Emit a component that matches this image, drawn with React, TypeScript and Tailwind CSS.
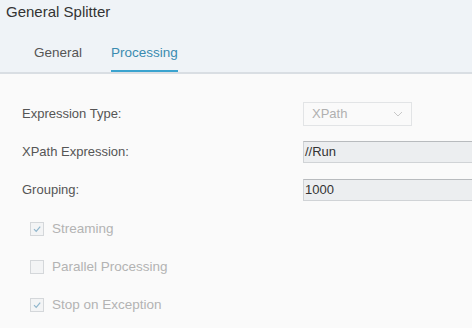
import React from "react";

function Check({ checked, label }: { checked: boolean; label: string }) {
  return (
    <div className="flex items-center h-[38px]">
      <span className="w-[14px] h-[14px] border border-[#d4d7da] bg-[#f3f4f5] flex items-center justify-center">
        {checked && (
          <svg width="10" height="10" viewBox="0 0 10 10">
            <path d="M2 5.2 L4.2 7.4 L8.2 2.6" fill="none" stroke="#8fb6cc" strokeWidth="1.2" />
          </svg>
        )}
      </span>
      <span className="ml-[8px] text-[13.5px] text-[#b3b3b3]">{label}</span>
    </div>
  );
}

export default function App() {
  return (
    <div className="w-[474px] h-[331px] bg-white overflow-hidden font-['Liberation_Sans',Arial,sans-serif]">
      <div className="w-[472px] bg-[#eff3f7] border-b-2 border-[#d9dee3]">
        <div className="pl-[6px] pt-[1px] h-[28px] text-[15px] text-[#333] leading-[22px]">General Splitter</div>
        <div className="flex pl-[34px] gap-[29px] text-[13.5px] h-[44px]">
          <div className="pt-[15px] text-[#555]">General</div>
          <div className="pt-[15px] text-[#3a8bb0] border-b-2 border-[#3aa3cf] h-[44px]">Processing</div>
        </div>
      </div>
      <div className="w-[472px] h-[254px] bg-[#fafafa] pt-[28px]">
        <div className="flex items-center h-[24px]">
          <div className="w-[303px] pl-[22px] text-[13px] text-[#555]">Expression Type:</div>
          <div className="w-[109px] h-[24px] border border-[#e2e4e6] bg-[#fafafa] flex items-center justify-between pl-[8px] pr-[8px]">
            <span className="text-[13px] text-[#b0b0b0]">XPath</span>
            <svg width="10" height="6" viewBox="0 0 10 6">
              <path d="M1 1 L5 5 L9 1" fill="none" stroke="#c8c8c8" strokeWidth="1" />
            </svg>
          </div>
        </div>
        <div className="flex items-center h-[22px] mt-[15px]">
          <div className="w-[303px] pl-[22px] text-[13px] text-[#555]">XPath Expression:</div>
          <div className="flex-1 h-[22px] bg-[#eceef0] border border-[#d0d3d6] border-t-[#b8bbbe] border-r-0 flex items-center pl-[1px] text-[13px] text-[#333]">//Run</div>
        </div>
        <div className="flex items-center h-[22px] mt-[16px]">
          <div className="w-[303px] pl-[22px] text-[13px] text-[#555]">Grouping:</div>
          <div className="flex-1 h-[22px] bg-[#eceef0] border border-[#d0d3d6] border-t-[#b8bbbe] border-r-0 flex items-center pl-[1px] text-[13px] text-[#333]">1000</div>
        </div>
        <div className="pl-[30px] mt-[9px]">
          <Check checked label="Streaming" />
          <Check checked={false} label="Parallel Processing" />
          <Check checked label="Stop on Exception" />
        </div>
      </div>
    </div>
  );
}
